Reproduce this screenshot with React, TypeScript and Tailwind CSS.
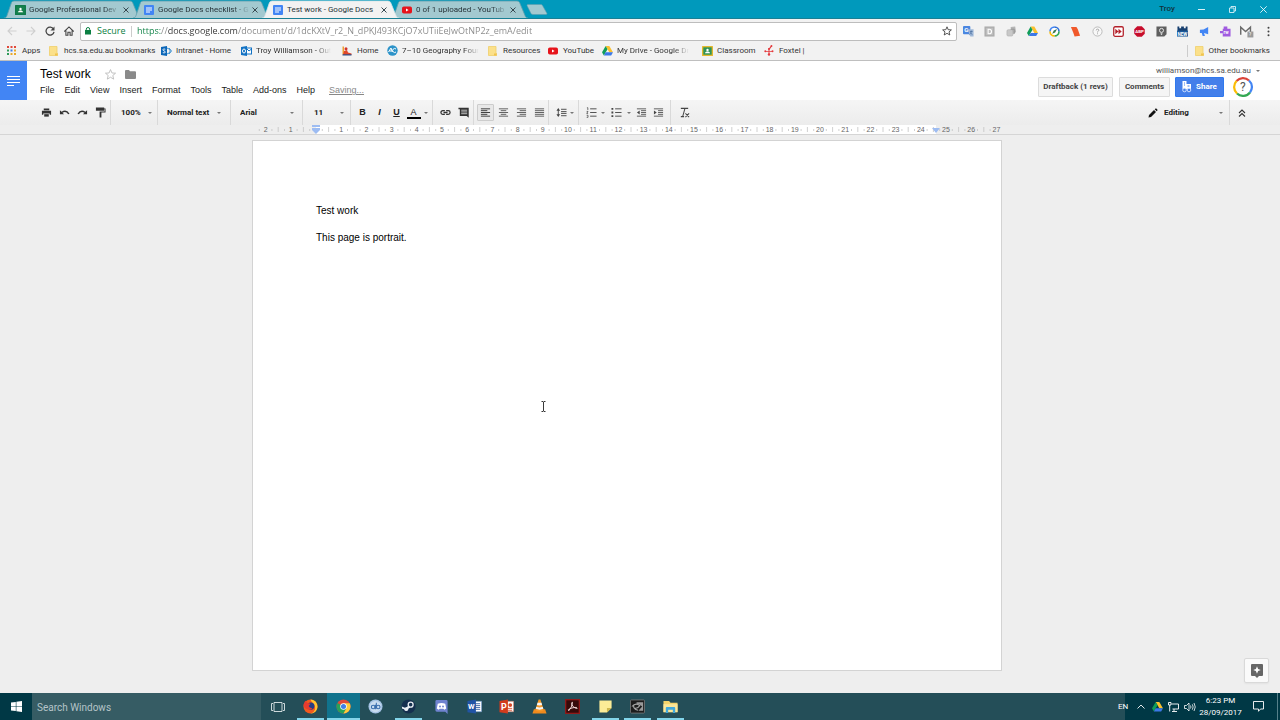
import { useState, type ReactNode } from "react";

type TabProps = {
  title: string;
  icon: ReactNode;
  active?: boolean;
};

const DocsIcon = () => (
  <svg viewBox="0 0 10 10" className="size-[10px]">
    <rect width="10" height="10" rx="1" fill="#4285f4" />
    <path d="M2 3h6M2 5h6M2 7h4" stroke="#fff" strokeWidth="1" />
  </svg>
);

const ClassroomIcon = ({ frame = "#0f7b4a", board = "#17824f" }: { frame?: string; board?: string }) => (
  <svg viewBox="0 0 11 10" className="h-[10px] w-[11px]">
    <rect width="11" height="10" rx="0.5" fill={frame} />
    <rect x="1.3" y="1.3" width="8.4" height="7.4" fill={board} />
    <circle cx="5.5" cy="4" r="1.2" fill="#fff" />
    <path d="M3 7.3c0-2.4 5-2.4 5 0z" fill="#fff" />
  </svg>
);

const YouTubeIcon = () => (
  <svg viewBox="0 0 10 8" className="h-[8px] w-[10px]">
    <rect y="0.5" width="10" height="7" rx="1.8" fill="#e6141b" />
    <path d="M4 2.5v3l2.6-1.5z" fill="#fff" />
  </svg>
);

const DriveIcon = () => (
  <svg viewBox="0 0 12 11" className="h-[10px] w-[11px]">
    <path d="M4 0h4l4 7H8z" fill="#fbc02d" />
    <path d="M4 0l2 3.5L2 10.5 0 7z" fill="#109d58" />
    <path d="M4 7h8l-2 3.5H2z" fill="#3b78e7" />
  </svg>
);

const FolderIcon = () => (
  <svg viewBox="0 0 9 10" className="h-[10px] w-[9px]">
    <path d="M0.5 0.5h7.5v7l0.7 0v2H0.5z" fill="#fbe08a" stroke="#efcf6b" strokeWidth="0.8" />
    <path d="M6 7.5h2.7v2H6z" fill="#f1c34d" />
  </svg>
);

const Caret = () => (
  <svg viewBox="0 0 4 2" className="pointer-events-none h-[2px] w-[4px] shrink-0">
    <path d="M0 0h4L2 2z" fill="#777" />
  </svg>
);

const Tab = ({ title, icon, active }: TabProps) => (
  <div className={`relative -mr-[8px] h-[18px] w-[137px] ${active ? "z-10" : ""}`}>
    <svg viewBox="0 0 137 18" className="absolute inset-0 h-full w-full" preserveAspectRatio="none">
      <path
        d="M0 18C2 18 2.400 17 3 15.500L7.500 2.500Q8.200 1 10 1H126Q128 1 128.600 2.500L134 15.500C134.600 17 135 18 137 18"
        fill={active ? "#f2f2f2" : "#a3c9d0"}
        stroke={active ? "#d8e4e7" : "#5e9eac"}
        strokeWidth="0.8"
      />
    </svg>
    <div className="relative flex h-full items-center pt-px pr-[12px] pl-[11px]">
      <span className="flex w-[14px] shrink-0">{icon}</span>
      <button
        className={`text-left text-[8px] whitespace-nowrap text-[#263238] ${
          active ? "" : "[mask-image:linear-gradient(to_right,#000_75px,transparent_92px)]"
        }`}
      >
        {title}
      </button>
      <button aria-label={`Close ${title}`} className="ml-auto">
        <svg viewBox="0 0 6 6" className="size-[6px]">
          <path d="M0.500 0.500l5 5M5.500 0.500l-5 5" stroke="#37474f" strokeWidth="1" />
        </svg>
      </button>
    </div>
  </div>
);

const TabStrip = () => (
  <header className="flex h-[19px] items-end border-b border-[#1a7f94] bg-[#0099bc] pl-[4px]">
    <Tab title="Google Professional Dev" icon={<ClassroomIcon />} />
    <Tab title="Google Docs checklist - G" icon={<DocsIcon />} />
    <Tab title="Test work - Google Docs" icon={<DocsIcon />} active />
    <Tab title="0 of 1 uploaded - YouTub" icon={<YouTubeIcon />} />
    <button aria-label="New tab" className="ml-[6px] self-center pt-px">
      <svg viewBox="0 0 22 11" className="h-[11px] w-[22px]">
        <path d="M1.500 0.500H15q1 0 1.500 1L21 9.500q0 1-1 1H7q-1.500 0-2-1L1 1.500z" fill="#a3c9d0" stroke="#5e9eac" strokeWidth="0.600" />
      </svg>
    </button>
    <div className="ml-auto flex items-center self-center pr-[13px]">
      <span className="mr-[23px] text-[8px] font-medium text-[#12303a]">Troy</span>
      <button aria-label="Minimise" className="mr-[24px]">
        <svg viewBox="0 0 7 7" className="size-[7px]">
          <path d="M0 3.500h7" stroke="#d8f1f7" />
        </svg>
      </button>
      <button aria-label="Restore" className="mr-[24px]">
        <svg viewBox="0 0 7 7" className="size-[7px]">
          <path d="M0.500 2h4.500v4.500H0.500zM2 2V0.500h4.500V5H5" fill="none" stroke="#d8f1f7" strokeWidth="0.900" />
        </svg>
      </button>
      <button aria-label="Close">
        <svg viewBox="0 0 7 7" className="size-[7px]">
          <path d="M0.300 0.300l6.400 6.400M6.700 0.300L0.300 6.700" stroke="#eafafd" strokeWidth="0.900" />
        </svg>
      </button>
    </div>
  </header>
);

const extensions: { name: string; icon: ReactNode }[] = [
  {
    name: "Translate",
    icon: (
      <>
        <rect x="0" y="0" width="8" height="9" rx="1" fill="#4a86e0" />
        <path d="M5 3.500h6.500v8H8z" fill="#9fb8d8" />
        <text x="1.300" y="6.800" fontSize="6.500" fill="#fff" fontWeight="700">G</text>
        <path d="M7.500 6h3M9 5v1c0 2-1 3-2 3.500M8 7l2 2.500" stroke="#456a9c" strokeWidth="0.700" fill="none" />
      </>
    ),
  },
  {
    name: "Draftback",
    icon: (
      <>
        <rect x="0.500" y="0.500" width="11" height="11" fill="#adadad" />
        <rect x="2" y="2" width="8" height="8" fill="#bdbdbd" />
        <path d="M4.500 3.500v5h1.200a2.500 2.500 0 0 0 0-5z" fill="none" stroke="#fff" strokeWidth="1.200" />
      </>
    ),
  },
  {
    name: "Copy",
    icon: (
      <>
        <path d="M5 1l5-0.500 1 6-4 3z" fill="#b5b5b5" />
        <rect x="1" y="4" width="6.500" height="7" rx="1.500" fill="#c8c8c8" stroke="#aaa" strokeWidth="0.600" />
        <path d="M5 3.500h4v5" stroke="#929292" fill="none" />
      </>
    ),
  },
  {
    name: "Drive",
    icon: (
      <>
        <path d="M4 0.500h4l4 7H8z" fill="#fbc02d" />
        <path d="M4 0.500l2 3.500-4 7-2-3.500z" fill="#109d58" />
        <path d="M4 7.500h8L10 11H2z" fill="#3b78e7" />
      </>
    ),
  },
  {
    name: "Compass",
    icon: (
      <>
        <path d="M1.200 6a4.800 4.800 0 0 1 4.800-4.800" stroke="#4285f4" strokeWidth="2" fill="none" />
        <path d="M6 1.200a4.800 4.800 0 0 1 4.800 4.800" stroke="#2f6fd8" strokeWidth="2" fill="none" />
        <path d="M10.800 6A4.800 4.800 0 0 1 6 10.800" stroke="#34a853" strokeWidth="2" fill="none" />
        <path d="M6 10.800A4.800 4.800 0 0 1 1.200 6" stroke="#fbbc05" strokeWidth="2" fill="none" />
        <circle cx="6" cy="6" r="3.800" fill="#fff" />
        <path d="M8.800 3.200L6.700 7.200 3.500 8.500 5.200 5z" fill="#377a4b" />
      </>
    ),
  },
  {
    name: "Office",
    icon: <path d="M1 1h6l1.500 2.500L11 10.500 5 11.500 3.500 7z" fill="#f0592b" />,
  },
  {
    name: "Help",
    icon: (
      <>
        <circle cx="6" cy="6" r="5" fill="#f8f8f8" stroke="#b0b0b0" strokeWidth="0.900" />
        <path d="M4.600 4.800q0-1.400 1.400-1.400t1.400 1.300q0 0.900-1.400 1.600v0.700M6 8v1" fill="none" stroke="#999" strokeWidth="0.900" />
      </>
    ),
  },
  {
    name: "Speed",
    icon: (
      <>
        <rect x="0.800" y="0.800" width="10.400" height="10.400" rx="1.500" fill="#fff" stroke="#b3202a" strokeWidth="1.400" />
        <path d="M2.500 3l3.500 3-3.500 3zM6 3l3.500 3L6 9z" fill="#b3202a" />
      </>
    ),
  },
  {
    name: "Adblock",
    icon: (
      <>
        <path d="M3.500 0.300h5L11.700 3.500v5L8.500 11.700h-5L0.300 8.500v-5z" fill="#c70d2c" />
        <text x="1.300" y="7.900" fontSize="4.800" fill="#fff" fontWeight="700">ABP</text>
      </>
    ),
  },
  {
    name: "Keep",
    icon: (
      <>
        <path d="M0.500 0.500h11v8.500L9 11.500H0.500z" fill="#5f5f5f" />
        <circle cx="6" cy="4.800" r="2.200" fill="none" stroke="#eee" strokeWidth="1" />
        <path d="M5 8h2M5.300 9.300h1.400" stroke="#eee" strokeWidth="0.900" />
      </>
    ),
  },
  {
    name: "New",
    icon: (
      <>
        <path d="M0.500 0.500h2v2h2v-2h3v2h2v-2h2v5h-11z" fill="#173f6f" />
        <rect x="0" y="5" width="12" height="6.500" fill="#1b5a9a" />
        <text x="0.500" y="10.400" fontSize="5" fill="#fff" fontWeight="700">NEW</text>
      </>
    ),
  },
  {
    name: "Announce",
    icon: <path d="M1 4l4-0.300 5-2.700v8L5.500 7.500 6.500 11H4L3 7.500H1z" fill="#4285f4" />,
  },
  {
    name: "Read and write",
    icon: (
      <>
        <path d="M4 3V0.500h4V3h3.500v8.500H3V8H0V5.500h3V3z" fill="#a05be0" />
        <text x="3.800" y="9" fontSize="5" fill="#fff" fontWeight="700">rw</text>
      </>
    ),
  },
  {
    name: "Gmail",
    icon: (
      <>
        <rect x="-1" y="0.500" width="12" height="9" fill="#f7f7f7" />
        <path d="M-0.300 9.500V1.300L5 6l5.300-4.700v8.200" fill="none" stroke="#6c6c6c" strokeWidth="1.600" />
        <rect x="7" y="6" width="6.500" height="6.500" fill="#9a9a9a" />
        <text x="8.800" y="11.300" fontSize="5" fill="#fff">?</text>
      </>
    ),
  },
  {
    name: "Menu",
    icon: (
      <g fill="#444">
        <circle cx="6" cy="1.800" r="1.100" />
        <circle cx="6" cy="6" r="1.100" />
        <circle cx="6" cy="10.200" r="1.100" />
      </g>
    ),
  },
];

const NavBar = () => {
  const [url, setUrl] = useState("https://docs.google.com/document/d/1dcKXtV_r2_N_dPKJ493KCjO7xUTiiEeJwOtNP2z_emA/edit");

  return (
    <div className="flex h-[24px] items-center pr-[6px] pl-[7px]">
      <div className="flex w-[73px] items-center gap-[9px]">
        <button aria-label="Back">
          <svg viewBox="0 0 10 10" className="size-[10px]" fill="none" stroke="#cfcfcf" strokeWidth="1.100">
            <path d="M9.500 5H1M5 1L1 5l4 4" />
          </svg>
        </button>
        <button aria-label="Forward">
          <svg viewBox="0 0 10 10" className="size-[10px]" fill="none" stroke="#cfcfcf" strokeWidth="1.100">
            <path d="M0.500 5H9M5 1l4 4-4 4" />
          </svg>
        </button>
        <button aria-label="Reload">
          <svg viewBox="0 0 10 10" className="size-[10px]">
            <path d="M8.500 3A4 4 0 1 0 9 5.800" fill="none" stroke="#444" strokeWidth="1.300" />
            <path d="M9.500 0.500v4h-4z" fill="#444" />
          </svg>
        </button>
        <button aria-label="Home">
          <svg viewBox="0 0 10 10" className="size-[10px]">
            <path d="M0.300 5.500L5 0.900l4.700 4.600M1.900 4.500V9.300h2V6.300h2.200v3h2V4.500" fill="none" stroke="#444" strokeWidth="1.100" />
          </svg>
        </button>
      </div>
      <div className="mr-[6px] flex h-[19px] flex-1 items-center rounded-[2px] border border-[#bdbdbd] bg-white px-[4px] font-['Open_Sans','Segoe_UI',sans-serif]">
        <svg viewBox="0 0 6 8" className="mr-[6px] h-[8px] w-[6px]">
          <rect y="3" width="6" height="4.500" fill="#0b8043" />
          <path d="M1.300 3.500V2.200a1.700 1.700 0 0 1 3.400 0v1.300" fill="none" stroke="#0b8043" />
        </svg>
        <span className="w-[34px] text-[9px] text-[#0b8043]">Secure</span>
        <span className="mr-[5px] h-[11px] border-l border-[#ccc]" />
        <input
          aria-label="Address"
          value={url}
          onChange={(e) => setUrl(e.target.value)}
          className="flex-1 bg-[linear-gradient(to_right,#0b8043_0,#0b8043_24px,#888_24px,#888_31px,#333_31px,#333_101px,#888_101px)] bg-clip-text text-[9px] text-transparent outline-none"
        />
        <button aria-label="Bookmark this page">
          <svg viewBox="0 0 10 10" className="size-[10px]">
            <path d="M5 0.800l1.200 2.900 3.200 0.200-2.400 2 0.800 3.100L5 7.300 2.200 9l0.800-3.100-2.400-2 3.200-0.200z" fill="none" stroke="#444" strokeWidth="0.900" />
          </svg>
        </button>
      </div>
      <div className="flex w-[311px] items-center justify-between">
        {extensions.map((ext) => (
          <button key={ext.name} aria-label={ext.name}>
            <svg viewBox="0 0 12 12" className="size-[11px] overflow-visible">
              {ext.icon}
            </svg>
          </button>
        ))}
      </div>
    </div>
  );
};

type Bookmark = {
  label: string;
  width: string;
  icon: ReactNode;
  fade?: boolean;
};

const bookmarks: Bookmark[] = [
  {
    label: "Apps",
    width: "w-[42px]",
    icon: (
      <svg viewBox="0 0 9 9" className="size-[9px]">
        <path d="M0 0h2v2H0zM3.500 0h2v2h-2zM7 0h2v2H7z" fill="#e0483a" />
        <path d="M0 3.500h2v2H0z" fill="#2e9b58" />
        <path d="M3.500 3.500h2v2h-2z" fill="#3f7ee8" />
        <path d="M7 3.500h2v2H7z" fill="#e9a92b" />
        <path d="M0 7h2v2H0z" fill="#2e9b58" />
        <path d="M3.500 7h2v2h-2zM7 7h2v2H7z" fill="#e9a92b" />
      </svg>
    ),
  },
  { label: "hcs.sa.edu.au bookmarks", width: "w-[112px]", icon: <FolderIcon /> },
  {
    label: "Intranet - Home",
    width: "w-[80px]",
    icon: (
      <svg viewBox="0 0 11 10" className="h-[10px] w-[11px]">
        <path d="M6 2l3 1.500v3L6 8M8 2l2.500 3L8 8" fill="none" stroke="#3a8fd0" strokeWidth="1" />
        <path d="M0 1l6-1v10L0 9z" fill="#0b66b8" />
        <path d="M4.300 3.200q-2.400-0.800-2.400 0.600 0 0.700 1.200 1.100t1.200 1.200q0 1.400-2.500 0.600" fill="none" stroke="#fff" strokeWidth="0.900" />
      </svg>
    ),
  },
  {
    label: "Troy Williamson - Out",
    width: "w-[101px]",
    fade: true,
    icon: (
      <svg viewBox="0 0 11 10" className="h-[10px] w-[11px]">
        <rect x="5" y="2" width="5.500" height="6" fill="#fff" stroke="#1272c4" />
        <path d="M6 3l2 2 2.500-2" fill="none" stroke="#1272c4" />
        <path d="M0 1l6-1v10L0 9z" fill="#1272c4" />
        <ellipse cx="3" cy="5" rx="1.500" ry="2" fill="none" stroke="#fff" />
      </svg>
    ),
  },
  {
    label: "Home",
    width: "w-[45px]",
    icon: (
      <svg viewBox="0 0 10 10" className="size-[10px]">
        <path d="M0.500 0.500l1.500 0v8H0.500z" fill="#f0a030" />
        <circle cx="4" cy="2.800" r="1.500" fill="#d2342a" />
        <path d="M2 5l3-1 1 2.500 3.500 1V9H1z" fill="#e0482c" />
        <path d="M0.500 8.300h9v1.200h-9z" fill="#29508c" />
      </svg>
    ),
  },
  {
    label: "7–10 Geography Four",
    width: "w-[101px]",
    fade: true,
    icon: (
      <svg viewBox="0 0 11 11" className="size-[11px]">
        <circle cx="5.500" cy="5.500" r="5.200" fill="#2c93c9" />
        <path d="M1.500 7L4 3l1.500 4M9 4a2 2 0 1 0 0 3M2.500 6h2.500" stroke="#fff" fill="none" strokeWidth="1" />
      </svg>
    ),
  },
  { label: "Resources", width: "w-[60px]", icon: <FolderIcon /> },
  { label: "YouTube", width: "w-[54px]", icon: <YouTubeIcon /> },
  { label: "My Drive - Google Dr", width: "w-[100px]", fade: true, icon: <DriveIcon /> },
  { label: "Classroom", width: "w-[62px]", icon: <ClassroomIcon frame="#e5b82e" board="#2f9457" /> },
  {
    label: "Foxtel |",
    width: "w-[45px]",
    icon: (
      <svg viewBox="0 0 10 11" className="h-[11px] w-[10px]">
        <g fill="#e4393c">
          <circle cx="5" cy="4" r="1" />
          <circle cx="7.500" cy="1" r="0.900" />
          <circle cx="1.300" cy="6.300" r="1" />
          <circle cx="8.500" cy="6.300" r="1" />
          <circle cx="5" cy="9.500" r="1.200" />
          <path d="M4.500 3h1v7h-1zM1 5.900h8v0.900H1zM5 3.500l2-3 1 0.700-2 2.800z" />
        </g>
      </svg>
    ),
  },
];

const BookmarksBar = () => (
  <nav className="flex h-[17px] items-center pr-[10px] pb-[2px] pl-[7px] text-[8px] text-[#333]">
    {bookmarks.map((b) => (
      <a key={b.label} href="#" className={`flex shrink-0 items-center ${b.width}`}>
        <span className="flex w-[15px] shrink-0">{b.icon}</span>
        <span
          className={`whitespace-nowrap ${
            b.fade ? "[mask-image:linear-gradient(to_left,transparent,#000_15px)]" : ""
          }`}
        >
          {b.label}
        </span>
      </a>
    ))}
    <a href="#" className="ml-auto flex items-center border-l border-[#ccc] pl-[7px] whitespace-nowrap">
      <span className="w-[14px]">
        <FolderIcon />
      </span>
      Other bookmarks
    </a>
  </nav>
);

const menus = ["File", "Edit", "View", "Insert", "Format", "Tools", "Table", "Add-ons", "Help"];

const DocsHeader = () => (
  <div className="flex h-[39px] bg-white">
    <a href="#" aria-label="Docs home" className="flex w-[27px] items-center justify-center bg-[#4285f4]">
      <svg viewBox="0 0 13 10" className="h-[10px] w-[13px]">
        <path d="M0 0.500h13M0 3.500h13M0 6.500h13M0 9.500h7" stroke="#fff" strokeWidth="1.200" />
      </svg>
    </a>
    <div className="flex flex-col pt-[5px] pl-[13px]">
      <div className="flex h-[16px] items-center">
        <h1 className="w-[65px] text-[12px] leading-[16px] text-black">Test work</h1>
        <button aria-label="Star" className="mr-[9px]">
          <svg viewBox="0 0 10 10" className="size-[11px]">
            <path d="M5 0.500l1.300 3.100 3.300 0.200-2.500 2.100 0.800 3.300L5 7.500 2.100 9.200l0.800-3.300L0.400 3.800l3.300-0.200z" fill="none" stroke="#bbb" strokeWidth="0.800" />
          </svg>
        </button>
        <button aria-label="Move to folder">
          <svg viewBox="0 0 11 9" className="h-[9px] w-[11px]">
            <path d="M0 1q0-1 1-1h3l1 1.300h5q1 0 1 1V8q0 1-1 1H1q-1 0-1-1z" fill="#8a8a8a" />
          </svg>
        </button>
      </div>
      <div className="flex h-[18px] items-center gap-[10px] text-[9px] text-[#222]">
        {menus.map((m) => (
          <button key={m}>{m}</button>
        ))}
        <a href="#" className="ml-[4px] text-[#888] underline">
          Saving...
        </a>
      </div>
    </div>
    <div className="ml-auto flex flex-col items-end">
      <button className="mt-[3px] mr-[20px] flex h-[13px] items-center gap-[5px] font-['Roboto',Arial,sans-serif] text-[8px] text-[#555]">
        williamson@hcs.sa.edu.au
        <Caret />
      </button>
      <div className="mr-[27px] flex items-center font-['Roboto',Arial,sans-serif] text-[8px] font-bold text-[#444]">
        <button className="h-[20px] w-[75px] rounded-[1px] border border-[#dcdcdc] bg-[#f5f5f5]">Draftback (1 revs)</button>
        <button className="ml-[6px] h-[20px] w-[51px] rounded-[1px] border border-[#dcdcdc] bg-[#f5f5f5]">Comments</button>
        <button className="ml-[5px] flex h-[20px] w-[49px] items-center justify-center gap-[4px] rounded-[1px] border border-[#3079ed] bg-[#437fea] text-white">
          <svg viewBox="0 0 10 12" className="h-[12px] w-[10px]">
            <path d="M0.500 0h4v3H9v5H0.500z" fill="#fff" />
            <path d="M2 2h1M2 4h1M5.500 5h2" stroke="#437fea" />
            <circle cx="2.500" cy="9" r="1.800" fill="#437fea" stroke="#d8e6ff" strokeWidth="0.900" />
            <circle cx="7" cy="9" r="1.800" fill="#437fea" stroke="#d8e6ff" strokeWidth="0.900" />
          </svg>
          Share
        </button>
        <button aria-label="Help" className="ml-[9px]">
          <svg viewBox="0 0 20 20" className="size-[20px]">
            <g fill="none" strokeWidth="2.200">
              <path d="M3.500 4A8.800 8.800 0 0 1 16 3.500" stroke="#db4437" />
              <path d="M16 3.500a8.800 8.800 0 0 1 1 12" stroke="#4285f4" />
              <path d="M17 15.500a8.800 8.800 0 0 1-13 1" stroke="#34a853" />
              <path d="M4 16.500A8.800 8.800 0 0 1 3.500 4" stroke="#fbbc05" />
            </g>
            <text x="7" y="14" fontSize="12" fontWeight="400" fill="#555">?</text>
          </svg>
        </button>
      </div>
    </div>
  </div>
);

const icons = {
  print: (
    <g fill="#333">
      <path d="M3 1.500h6v2H3zM1 4.200h10v4.300H9.500V7h-7v1.500H1z" />
      <path d="M3.500 7.800h5v2.700h-5z" />
    </g>
  ),
  undo: <path d="M1 3.500V8h4.500L3.800 6.300Q7.500 3.800 10 8l1.500-0.700Q8 1.500 2.800 5.200z" fill="#333" />,
  redo: <path d="M11 3.500V8H6.500l1.700-1.700Q4.500 3.800 2 8L0.500 7.300Q4 1.500 9.200 5.200z" fill="#333" />,
  paint: <path d="M1 0.500h9v1h1.500V6H7v5.500H5V5h5.500V2.500H10V4H1z" fill="#333" />,
  link: (
    <g fill="none" stroke="#333" strokeWidth="1.400">
      <path d="M5.300 4H3a2 2 0 0 0 0 4h2.300M6.700 4H9a2 2 0 0 1 0 4H6.700M3.800 6h4.400" />
    </g>
  ),
  comment: (
    <g>
      <path d="M0.500 0.800h11.200v11L9.500 9.800H2V2.500H0.500z" fill="#333" />
      <path d="M3.500 3.500h6.500M3.500 5.400h6.500M3.500 7.300h6.500" stroke="#eee" strokeWidth="0.800" />
    </g>
  ),
  left: <path d="M1 2h10M1 4h7M1 6h10M1 8h7M1 10h10" stroke="#333" strokeWidth="1" />,
  center: <path d="M1 2h10M3 4h6M1 6h10M3 8h6M1 10h10" stroke="#555" strokeWidth="1" />,
  right: <path d="M1 2h10M4 4h7M1 6h10M4 8h7M1 10h10" stroke="#555" strokeWidth="1" />,
  justify: <path d="M1 2h10M1 4h10M1 6h10M1 8h10M1 10h10" stroke="#555" strokeWidth="1" />,
  spacing: (
    <g>
      <path d="M5.500 2.500h6M5.500 5h6M5.500 7h6M5.500 9.500h6M2.500 3v6" stroke="#444" strokeWidth="1" />
      <path d="M0.500 4l2-2.800 2 2.800zM0.500 8l2 2.800 2-2.800z" fill="#444" />
    </g>
  ),
  numbered: (
    <g stroke="#444" strokeWidth="1" fill="none">
      <path d="M4.500 2h7M4.500 6h7M4.500 10h7" />
      <path d="M1 0.800h1v2.500M0.700 4.800h1.500L0.800 7h1.500M0.700 9h1.500v2.300H0.700" strokeWidth="0.800" />
    </g>
  ),
  bulleted: (
    <g>
      <path d="M4.500 2h7M4.500 6h7M4.500 10h7" stroke="#444" strokeWidth="1" />
      <path d="M0.500 1h2v2h-2zM0.500 5h2v2h-2zM0.500 9h2v2h-2z" fill="#444" />
    </g>
  ),
  outdent: (
    <g>
      <path d="M1 2h10M5.500 4h5.500M5.500 6h5.500M5.500 8h5.500M1 10h10" stroke="#555" strokeWidth="1" />
      <path d="M4 3.800v4.400L1 6z" fill="#444" />
    </g>
  ),
  indent: (
    <g>
      <path d="M1 2h10M5.500 4h5.500M5.500 6h5.500M5.500 8h5.500M1 10h10" stroke="#555" strokeWidth="1" />
      <path d="M1 3.800v4.400L4 6z" fill="#444" />
    </g>
  ),
  clear: (
    <g fill="none" stroke="#444" strokeWidth="1.100">
      <path d="M2 1.500h8M6.500 1.500L4 10.500M7 7l4 4M11 7l-4 4M2 10.500h3.500" />
    </g>
  ),
};

type ToolProps = {
  name: keyof typeof icons;
  label: string;
  width?: string;
  active?: boolean;
};

const Tool = ({ name, label, width = "w-[18px]", active }: ToolProps) => (
  <button
    aria-label={label}
    className={`flex h-[17px] shrink-0 items-center justify-center ${width} ${
      active ? "rounded-[1px] border border-[#ccc] bg-[#e8e8e8]" : ""
    }`}
  >
    <svg viewBox="0 0 12 12" className="size-[11px] shrink-0">
      {icons[name]}
    </svg>
  </button>
);

const Group = ({ className, children }: { className: string; children: ReactNode }) => (
  <div className={`flex h-full shrink-0 items-center border-r border-[#d9d9d9] ${className}`}>{children}</div>
);

const Dropdown = ({ label, value }: { label: string; value: string }) => (
  <div className="flex w-full items-center">
    <select
      aria-label={label}
      className="min-w-0 flex-1 appearance-none bg-transparent font-['Roboto',Arial,sans-serif] text-[8px] text-[#222] outline-none"
    >
      <option>{value}</option>
    </select>
    <Caret />
  </div>
);

const CaretButton = ({ label, width = "w-[8px]" }: { label: string; width?: string }) => (
  <button aria-label={label} className={`flex shrink-0 justify-center ${width}`}>
    <Caret />
  </button>
);

const Toolbar = () => (
  <div className="flex h-[25px] items-center bg-gradient-to-b from-[#f5f5f5] to-[#ececec] pl-[37px] font-bold text-[#222]">
    <Group className="w-[74px]">
      <Tool name="print" label="Print" />
      <Tool name="undo" label="Undo" />
      <Tool name="redo" label="Redo" />
      <Tool name="paint" label="Paint format" />
    </Group>
    <Group className="w-[47px] pr-[5px] pl-[10px]">
      <Dropdown label="Zoom" value="100%" />
    </Group>
    <Group className="w-[73px] pr-[9px] pl-[9px]">
      <Dropdown label="Styles" value="Normal text" />
    </Group>
    <Group className="w-[72px] pr-[8px] pl-[9px]">
      <Dropdown label="Font" value="Arial" />
    </Group>
    <Group className="w-[48px] pr-[6px] pl-[11px]">
      <Dropdown label="Font size" value="11" />
    </Group>
    <Group className="w-[82px] pl-[3px] text-[9px]">
      <button aria-label="Bold" className="w-[17px] shrink-0">B</button>
      <button aria-label="Italic" className="w-[17px] shrink-0 italic">I</button>
      <button aria-label="Underline" className="w-[17px] shrink-0 underline">U</button>
      <button aria-label="Text colour" className="flex w-[17px] shrink-0 flex-col items-center font-normal">
        <span className="leading-[10px]">A</span>
        <span className="h-[2px] w-[14px] bg-black" />
      </button>
      <CaretButton label="Text colour options" />
    </Group>
    <Group className="w-[41px] pl-[3px]">
      <Tool name="link" label="Insert link" />
      <Tool name="comment" label="Add comment" />
    </Group>
    <Group className="w-[75px] gap-px pl-[3px]">
      <Tool name="left" label="Left align" width="w-[17px]" active />
      <Tool name="center" label="Centre align" width="w-[17px]" />
      <Tool name="right" label="Right align" width="w-[17px]" />
      <Tool name="justify" label="Justify" width="w-[17px]" />
    </Group>
    <Group className="w-[30px] pl-[4px]">
      <Tool name="spacing" label="Line spacing" width="w-[16px]" />
      <CaretButton label="Line spacing options" width="w-[6px]" />
    </Group>
    <Group className="w-[92px] pl-[4px]">
      <Tool name="numbered" label="Numbered list" width="w-[16px]" />
      <CaretButton label="Numbered list options" />
      <Tool name="bulleted" label="Bulleted list" />
      <CaretButton label="Bulleted list options" />
      <Tool name="outdent" label="Decrease indent" width="w-[17px]" />
      <Tool name="indent" label="Increase indent" width="w-[17px]" />
    </Group>
    <div className="pl-[4px]">
      <Tool name="clear" label="Clear formatting" />
    </div>
    <div className="ml-auto flex h-full items-center">
      <Group className="w-[82px] pr-[6px]">
        <svg viewBox="0 0 10 10" className="mr-[6px] size-[10px] shrink-0">
          <path d="M0.500 9.500L1 7l5-5 2 2-5 5zM6.700 1.300L8 0.300 9.700 2 8.700 3.300z" fill="#111" />
        </svg>
        <Dropdown label="Mode" value="Editing" />
      </Group>
      <button aria-label="Hide menus" className="mr-[34px] ml-[8px]">
        <svg viewBox="0 0 8 8" className="size-[8px]">
          <path d="M1 4l3-3 3 3M1 7.500l3-3 3 3" fill="none" stroke="#333" strokeWidth="1.100" />
        </svg>
      </button>
    </div>
  </div>
);

const ORIGIN = 64;
const CM = 25.2;

// quarter marks between -2.25cm and 27cm, whole numbers get a label
const Ruler = () => {
  const marks = Array.from({ length: 118 }, (_, i) => (i - 9) / 4);

  return (
    <div className="flex h-[10px] justify-center border-b border-[#d5d5d5] bg-[#eeeeee] pr-[26px]">
      <svg viewBox="0 0 750 9" className="h-[9px] w-[750px] overflow-visible">
        <rect x={ORIGIN} y="0" width="620" height="9" fill="#fff" />
        {marks.map((m) => {
          const x = ORIGIN + m * CM;
          if (m === 0) return null;
          if (Number.isInteger(m)) {
            return (
              <text key={m} x={x} y="7" fontSize="7" textAnchor="middle" fill="#666">
                {Math.abs(m)}
              </text>
            );
          }
          const half = Number.isInteger(m * 2);
          return <path key={m} d={half ? `M${x} 2v5` : `M${x} 4v2`} stroke="#c4c4c4" strokeWidth="0.800" />;
        })}
        <path d="M60 0h8v2h-8zM60 3h8v2l-4 4-4-4zM680 3h8l-4 5z" fill="#9dbcf2" />
      </svg>
    </div>
  );
};

const DocumentArea = () => (
  <main className="relative flex flex-1 justify-center bg-[#eeeeee] pt-[5px] pr-[26px] pb-[22px]">
    <article className="w-[750px] border border-[#d3d3d3] bg-white px-[63px] pt-[62px] text-[10px] text-black">
      <p className="mb-[11px] leading-[16px]">Test work</p>
      <p className="leading-[16px]">This page is portrait.</p>
    </article>
    <svg viewBox="0 0 5 11" className="absolute top-[266px] left-[541px] h-[11px] w-[5px]">
      <path d="M0.500 0.500h1.500l0.500 0.500 0.500-0.500h1.500M2.500 1v9M0.500 10.500h1.500l0.500-0.500 0.500 0.500h1.500" fill="none" stroke="#222" strokeWidth="0.900" />
    </svg>
    <button
      aria-label="Explore"
      className="absolute right-[11px] bottom-[10px] flex size-[25px] items-center justify-center rounded-[2px] border border-[#d9d9d9] bg-[#fafafa] shadow-xs"
    >
      <svg viewBox="0 0 12 14" className="h-[14px] w-[12px]">
        <path d="M1 0h10q1 0 1 1v10q0 1-1 1H8l-2 2-2-2H1q-1 0-1-1V1q0-1 1-1z" fill="#666" />
        <path d="M6 2.200l1.100 2.700L9.800 6 7.100 7.100 6 9.800 4.900 7.100 2.200 6l2.700-1.100z" fill="#fff" />
      </svg>
    </button>
  </main>
);

type TaskbarApp = {
  name: string;
  icon: ReactNode;
  open?: boolean;
  focused?: boolean;
};

const apps: TaskbarApp[] = [
  {
    name: "Firefox",
    open: true,
    icon: (
      <>
        <circle cx="8" cy="8" r="7.500" fill="#f2591f" />
        <path d="M8 0.500c5 0 7.500 4 7.400 8-0.200 4-3.500 7-7.400 7 5-1.500 6-6 4-9.500C11 4 8.500 3 8 0.500z" fill="#ffc52e" />
        <circle cx="8.300" cy="7.500" r="3.900" fill="#253f86" />
        <path d="M0.500 7C1 4 2 3 2.500 1.800L5 4.300 8 5 6 7.500q1 2.500 4 2-2 3-5.500 1.500T0.500 7z" fill="#e83b30" />
      </>
    ),
  },
  {
    name: "Chrome",
    open: true,
    focused: true,
    icon: (
      <>
        <circle cx="8" cy="8" r="7.500" fill="#e04a3a" />
        <path d="M8 8L1.500 4.300A7.500 7.500 0 0 0 8 15.500l3.500-6z" fill="#27a35a" />
        <path d="M8 15.500A7.500 7.500 0 0 0 14.600 4.500H8v3.500l3 2z" fill="#fccb3b" />
        <circle cx="8" cy="8" r="3.500" fill="#fff" />
        <circle cx="8" cy="8" r="2.700" fill="#3f7fe8" />
      </>
    ),
  },
  {
    name: "Audio book",
    icon: (
      <>
        <circle cx="8" cy="8" r="7.500" fill="#a5c3e4" />
        <circle cx="8" cy="8" r="6" fill="#c9dcf0" />
        <circle cx="5.500" cy="8.500" r="1.900" fill="none" stroke="#3b6fae" strokeWidth="1.200" />
        <path d="M7.800 6v5M8.900 4v6" stroke="#3b6fae" strokeWidth="1.100" />
        <circle cx="10.900" cy="8.500" r="1.900" fill="none" stroke="#3b6fae" strokeWidth="1.200" />
      </>
    ),
  },
  {
    name: "Steam",
    open: true,
    icon: (
      <>
        <circle cx="8" cy="8" r="7.500" fill="#15304f" />
        <path d="M0.800 8l4 1.700 4-3.200 1.500 2-4 3.200-5-1.200z" fill="#e9eef3" />
        <circle cx="10.300" cy="6" r="3.300" fill="#e9eef3" />
        <circle cx="10.300" cy="6" r="1.900" fill="#15304f" />
        <circle cx="5.600" cy="10.800" r="2" fill="#e9eef3" />
      </>
    ),
  },
  {
    name: "Discord",
    icon: (
      <>
        <path d="M3 1h10q1.500 0 1.500 1.500V16l-2.500-2.500H3q-1.500 0-1.500-1.500V2.500Q1.500 1 3 1z" fill="#6f83cf" />
        <path d="M4 5q4-1.500 8 0l1 5-2 1.500-1-1H6l-1 1L3 10z" fill="#fff" />
        <circle cx="6.400" cy="8" r="1" fill="#6f83cf" />
        <circle cx="9.600" cy="8" r="1" fill="#6f83cf" />
      </>
    ),
  },
  {
    name: "Word",
    icon: (
      <>
        <path d="M8 2.500h7.500v11H8z" fill="#fff" stroke="#7aa0d8" strokeWidth="0.600" />
        <path d="M9 5h5M9 7h5M9 9h5M9 11h5" stroke="#2b579a" strokeWidth="0.900" />
        <path d="M0.500 2L9.500 0.500v15L0.500 14z" fill="#2154a5" />
        <text x="1" y="11" fontSize="8" fontWeight="700" fill="#fff">W</text>
      </>
    ),
  },
  {
    name: "PowerPoint",
    icon: (
      <>
        <path d="M8 2.500h7.500v11H8z" fill="#fff" stroke="#e58b73" strokeWidth="0.600" />
        <circle cx="12" cy="6.500" r="2" fill="#d24726" />
        <path d="M9 10h5M9 12h5" stroke="#d24726" strokeWidth="0.900" />
        <path d="M0.500 2L9.500 0.500v15L0.500 14z" fill="#d13b1c" />
        <text x="2" y="11.500" fontSize="9.500" fontWeight="700" fill="#fff">P</text>
      </>
    ),
  },
  {
    name: "VLC",
    icon: (
      <>
        <path d="M2 11h12l1.500 4.500h-15z" fill="#f08a1c" />
        <path d="M7 0.500h2L12.500 12q-4.500 2.500-9 0z" fill="#f79a2a" />
        <path d="M5.900 4h4.200l0.700 2.300q-2.800 1-5.600 0zM4.600 8.300q3.400 1.300 6.800 0l0.700 2.200q-4 1.700-8.200 0z" fill="#f6f6f6" />
      </>
    ),
  },
  {
    name: "Acrobat",
    icon: (
      <>
        <rect x="0.700" y="0.700" width="14.600" height="14.600" fill="#360a0a" stroke="#8f1919" strokeWidth="1.400" />
        <path d="M4 12.500Q7.500 9 8 3.500 7 3 7.200 5.500 9 10 13 10q0-1.500-3-1-4 0.500-6.500 2.500z" fill="none" stroke="#f4dcdc" />
      </>
    ),
  },
  {
    name: "Sticky Notes",
    open: true,
    icon: (
      <>
        <path d="M1.500 1.500h13v8l-5 5h-8z" fill="#fbec97" />
        <path d="M14.500 9.500h-5v5z" fill="#cdb74f" />
      </>
    ),
  },
  {
    name: "GeForce",
    open: true,
    icon: (
      <>
        <rect x="0.500" y="1" width="15" height="14" rx="1" fill="#1d1d1d" stroke="#777" strokeWidth="0.900" />
        <path d="M7 3.500h7v9H9l4-4.500q-2.500-3-6-3z" fill="#9a9a9a" />
        <path d="M2 8q4-4.500 8.500-1Q8 11 4.500 9.500M4 6.500Q3 10.500 8.500 12" fill="none" stroke="#a5a5a5" strokeWidth="1.200" />
      </>
    ),
  },
  {
    name: "File Explorer",
    open: true,
    icon: (
      <>
        <path d="M0.500 2h6l1.500 2h7.500v10H0.500z" fill="#f6d46b" />
        <path d="M0.500 5.500h15V14H0.500z" fill="#fbe69a" />
        <path d="M3 15V9.500q0-1 1-1h8q1 0 1 1V15h-2.500v-3.500h-5V15z" fill="#42a9dc" />
      </>
    ),
  },
];

const Taskbar = () => {
  const [query, setQuery] = useState("");

  return (
    <footer className="flex h-[27px] bg-[#244e58] text-white">
      <button aria-label="Start" className="flex w-[32px] items-center justify-center bg-[#003845]">
        <svg viewBox="0 0 11 11" className="size-[11px]">
          <path d="M0 1.600l4.800-0.700v4.300H0zM5.400 0.800L11 0v5.200H5.400zM0 5.800h4.800v4.300L0 9.400zM5.400 5.800H11V11l-5.600-0.800z" fill="#fff" />
        </svg>
      </button>
      <input
        aria-label="Search Windows"
        placeholder="Search Windows"
        value={query}
        onChange={(e) => setQuery(e.target.value)}
        className="w-[229px] bg-[#365c64] px-[5px] pt-px text-[10px] text-white outline-none placeholder:text-[#b5c4c8]"
      />
      <button aria-label="Task view" className="flex w-[33px] items-center justify-center">
        <svg viewBox="0 0 14 10" className="h-[10px] w-[14px]">
          <path d="M3 0.500h8v9H3zM2 1.500H0.500v7H2M12 1.500h1.500v7H12" fill="none" stroke="#e0e8ea" strokeWidth="0.900" />
        </svg>
      </button>
      <div className="flex w-[393px] shrink-0">
        {apps.map((app) => (
          <button
            key={app.name}
            aria-label={app.name}
            className={`flex flex-1 flex-col items-center ${app.focused ? "bg-[#10738d]" : ""}`}
          >
            <span className="flex flex-1 items-center pt-[2px]">
              <svg viewBox="0 0 16 16" className="size-[15px]">
                {app.icon}
              </svg>
            </span>
            <span className={`h-[2px] ${app.focused ? "w-full" : "w-[27px]"} ${app.open ? "bg-[#83d5ea]" : ""}`} />
          </button>
        ))}
      </div>
      <div className="ml-auto flex items-center bg-[#003845] text-[8px]">
        <span className="-ml-[7px] w-[19px]">EN</span>
        <button aria-label="Show hidden icons" className="mr-[7px]">
          <svg viewBox="0 0 8 5" className="h-[5px] w-[8px]">
            <path d="M0.500 4.500L4 1l3.500 3.500" fill="none" stroke="#fff" strokeWidth="0.900" />
          </svg>
        </button>
        <button aria-label="Google Drive" className="mr-[5px]">
          <DriveIcon />
        </button>
        <button aria-label="Network" className="mr-[5px]">
          <svg viewBox="0 0 11 10" className="h-[10px] w-[11px]">
            <path d="M3.500 2h7v5h-6M6 7v2M4 9.500h5M0.500 0.500h2.500v2.500H0.500zM1.700 3v6.500" fill="none" stroke="#fff" strokeWidth="0.900" />
          </svg>
        </button>
        <button aria-label="Volume">
          <svg viewBox="0 0 12 10" className="h-[10px] w-[12px]">
            <path d="M0.500 3.500h2L5 1v8L2.500 6.500h-2zM6.500 3.500q1 1.500 0 3M8.300 2.300q1.700 2.700 0 5.400M10 1q2.500 4 0 8" fill="none" stroke="#fff" strokeWidth="0.800" />
          </svg>
        </button>
        <time className="w-[49px] text-center leading-[12px]">
          6:23 PM
          <br />
          28/09/2017
        </time>
        <button aria-label="Notifications" className="mr-[13px] ml-[8px]">
          <svg viewBox="0 0 11 11" className="size-[11px]">
            <path d="M0.500 0.500h10v7.500H7.500L5.500 10.300V8h-5z" fill="none" stroke="#fff" strokeWidth="0.900" />
          </svg>
        </button>
        <span className="mr-[2px] h-full border-l border-[#55808a]" />
      </div>
    </footer>
  );
};

const App = () => {
  return (
    <div className="flex min-h-screen flex-col font-['Liberation_Sans',Arial,sans-serif]">
      <div className="border-b border-[#bfbfbf] bg-[#f2f2f2] font-['Roboto','Segoe_UI',sans-serif]">
        <TabStrip />
        <NavBar />
        <BookmarksBar />
      </div>
      <DocsHeader />
      <Toolbar />
      <Ruler />
      <DocumentArea />
      <div className="font-['Roboto','Segoe_UI',sans-serif]">
        <Taskbar />
      </div>
    </div>
  );
};

export default App;
